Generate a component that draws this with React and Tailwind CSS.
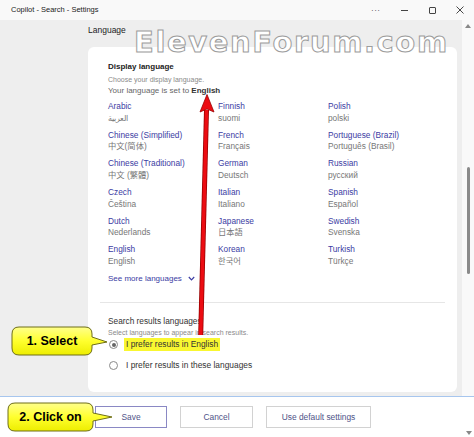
const rows = [
  [["Arabic", "العربية"], ["Finnish", "suomi"], ["Polish", "polski"]],
  [["Chinese (Simplified)", "中文(简体)"], ["French", "Français"], ["Portuguese (Brazil)", "Português (Brasil)"]],
  [["Chinese (Traditional)", "中文 (繁體)"], ["German", "Deutsch"], ["Russian", "русский"]],
  [["Czech", "Čeština"], ["Italian", "Italiano"], ["Spanish", "Español"]],
  [["Dutch", "Nederlands"], ["Japanese", "日本語"], ["Swedish", "Svenska"]],
  [["English", "English"], ["Korean", "한국어"], ["Turkish", "Türkçe"]],
];

const TitleBar = () => (
  <div className="h-[20px] flex items-center bg-[#f9f9f9] pl-[11px] text-[7.5px] text-[#222]">
    <span>Copilot - Search - Settings</span>
    <div className="ml-auto flex items-center text-[#333]">
      <span className="w-[28px] text-center text-[8px] tracking-[1px] -mt-[3px]">...</span>
      <span className="w-[28px] flex justify-center">
        <span className="block w-[7px] h-px bg-[#444]" />
      </span>
      <span className="w-[28px] flex justify-center">
        <span className="block w-[7px] h-[7px] border border-[#444] rounded-[1px]" />
      </span>
      <span className="w-[28px] flex justify-center">
        <svg width="8" height="8" viewBox="0 0 8 8">
          <path d="M0.5 0.5L7.5 7.5M7.5 0.5L0.5 7.5" stroke="#333" strokeWidth="0.9" />
        </svg>
      </span>
    </div>
  </div>
);

const Radio = ({ checked }) => (
  <span className="w-[9px] h-[9px] rounded-full border border-[#8a8a8a] flex items-center justify-center bg-white">
    {checked && <span className="w-[4px] h-[4px] rounded-full bg-[#666]" />}
  </span>
);

const Callout = ({ box, text, textClass }) => (
  <>
    <svg className="absolute inset-0" width="100%" height="100%">
      <defs>
        <linearGradient id={"g" + text.length} x1="0" y1="0" x2="0" y2="1">
          <stop offset="0" stopColor="#ffff8c" />
          <stop offset="0.5" stopColor="#ffff2e" />
          <stop offset="1" stopColor="#eded00" />
        </linearGradient>
      </defs>
      <path d={box} fill={"url(#g" + text.length + ")"} stroke="#6f6f18" strokeWidth="1" />
    </svg>
    <span className={"absolute left-[4px] top-[5px] h-[28px] flex items-center justify-center font-bold text-[12.5px] text-black " + textClass}>
      {text}
    </span>
  </>
);

const App = () => {
  return (
    <div className="relative w-[474px] h-[437px] overflow-hidden bg-[#eeeeee] font-['Liberation_Sans',Arial,'Noto_Sans_CJK_SC',sans-serif]">
      <TitleBar />
      <div className="flex h-[376px]">
        <div className="w-[462px] pl-[88px] pr-[5px]">
          <div className="h-[27px] pt-[4px] text-[8.5px] leading-[12px] text-[#222]">Language</div>
          <div className="h-[345px] bg-white rounded-[6px] pt-[13px] px-[20px]">
            <div className="text-[8px] leading-[14px] font-semibold text-[#222]">Display language</div>
            <div className="text-[7px] leading-[11px] text-[#8a8a8a]">Choose your display language.</div>
            <div className="text-[8px] leading-[12px] text-[#666]">
              Your language is set to <span className="font-bold text-[#333]">English</span>
            </div>
            <div className="mt-[4px] grid grid-cols-[110px_110px_110px] gap-y-[5.7px]">
              {rows.map((row) =>
                row.map(([name, native]) => (
                  <div key={name} className="text-[8.3px] leading-[11.5px]">
                    <div className="text-[#3b3ca3]">{name}</div>
                    <div className="text-[#777]">{native}</div>
                  </div>
                ))
              )}
            </div>
            <div className="mt-[5.7px] flex items-center gap-[6px] text-[8px] leading-[11.5px] text-[#3b3ca3]">
              <span>See more languages</span>
              <svg width="7" height="5" viewBox="0 0 7 5">
                <path d="M0.8 1L3.5 3.8L6.2 1" stroke="#3b3ca3" strokeWidth="1.2" fill="none" />
              </svg>
            </div>
            <div className="mt-[17px] -mx-[8px] h-px bg-[#e6e6e6]" />
            <div className="mt-[12px] text-[8.3px] leading-[13px] text-[#333]">Search results languages</div>
            <div className="text-[7px] leading-[9px] text-[#8a8a8a]">Select languages to appear in search results.</div>
            <div className="mt-[1px] flex flex-col gap-[7px] text-[8.4px] text-[#333]">
              <div className="h-[14px] flex items-center">
                <span className="ml-[1px]"><Radio checked /></span>
                <span className="ml-[6px] px-[2px] leading-[13px] bg-[#f9f730]">I prefer results in English</span>
              </div>
              <div className="h-[14px] flex items-center">
                <span className="ml-[1px]"><Radio /></span>
                <span className="ml-[8px] leading-[13px]">I prefer results in these languages</span>
              </div>
            </div>
          </div>
        </div>
        <div className="w-[12px] bg-[#f9f9f9] flex flex-col items-center pt-[4px]">
          <span className="w-0 h-0 border-x-[3px] border-x-transparent border-b-[4px] border-b-[#888]" />
          <span className="mt-[139px] w-[3px] h-[107px] rounded-full bg-[#8a8a8a]" />
        </div>
      </div>
      <div className="h-[41px] border-t border-[#a7c6ee] bg-white flex items-start pt-[9px] text-[8.4px] text-[#4f5388]">
        <button className="ml-[95px] w-[72px] h-[22px] border border-[#8a88c4] bg-white">Save</button>
        <button className="ml-[13px] w-[73px] h-[22px] border border-[#d2d2d2] bg-white">Cancel</button>
        <button className="ml-[13px] w-[105px] h-[22px] border border-[#d2d2d2] bg-white">Use default settings</button>
        <span className="ml-auto mr-[2px] mt-[25px] w-0 h-0 border-x-[3px] border-x-transparent border-t-[4px] border-t-[#888]" />
      </div>

      {/* watermark */}
      <div className="absolute left-[134px] top-[22px] text-[29px] leading-[40px] font-bold tracking-[1.6px] font-['DejaVu_Sans',sans-serif] text-white [-webkit-text-stroke:1px_#9c9c9c] pointer-events-none">
        ElevenForum.com
      </div>

      {/* red arrow */}
      <svg className="absolute left-[190px] top-[90px]" width="30" height="250" viewBox="0 0 30 250">
        <path d="M16.5 20L10.7 245" stroke="#9a0000" strokeWidth="5" />
        <path d="M16.5 20L10.7 245" stroke="#ec0c12" strokeWidth="3.4" />
        <path d="M17 4.5L24 22L17 19L10 22Z" fill="#ec0c12" stroke="#9a0000" strokeWidth="0.8" strokeLinejoin="round" />
      </svg>

      {/* callouts */}
      <div className="absolute left-[8px] top-[322px] w-[104px] h-[38px]">
        <Callout box="M11 5H77Q84 5 84 12V15L99 20L84 23V26Q84 33 77 33H11Q4 33 4 26V12Q4 5 11 5Z" text="1. Select" textClass="w-[80px]" />
      </div>
      <div className="absolute left-[4px] top-[398px] w-[112px] h-[38px]">
        <Callout box="M11 5H82Q89 5 89 12V15L108 19L89 23V26Q89 33 82 33H11Q4 33 4 26V12Q4 5 11 5Z" text="2. Click on" textClass="w-[85px]" />
      </div>
    </div>
  );
};

export default App;
